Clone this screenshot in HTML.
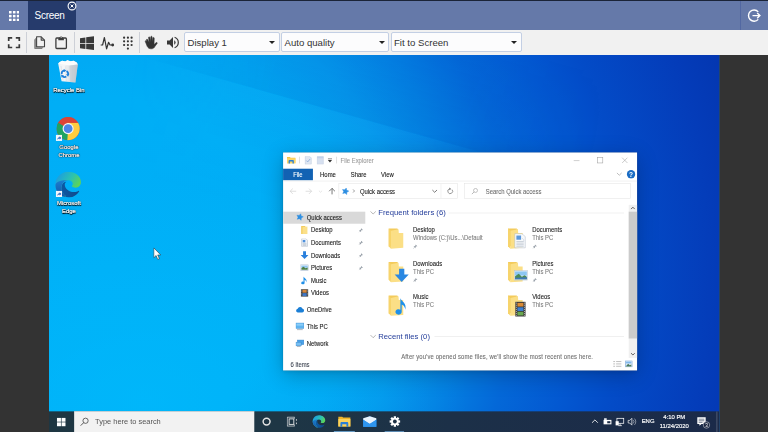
<!DOCTYPE html>
<html lang="en">
<head>
<meta charset="utf-8">
<title>Screen</title>
<style>
*{box-sizing:border-box;margin:0;padding:0}
html,body{width:768px;height:432px;overflow:hidden;background:#333333;font-family:"Liberation Sans",sans-serif}
body{position:relative}
.abs{position:absolute}
#topline{left:0;top:0;width:768px;height:1px;background:#1b2438}
#header{left:0;top:1px;width:768px;height:29.400px;background:#6579a9;z-index:3}
#tab{left:28px;top:0;width:48.300px;height:29.400px;background:#263b6c}
#tab span{position:absolute;left:6.5px;top:9px;font-size:10px;color:#fff;letter-spacing:-0.250px;line-height:12px}
#logout{left:740px;top:0;width:28px;height:29.400px;border-left:1px solid #5268a2}
#toolbar{left:0;top:30px;width:768px;height:25px;background:#f1f1f1}
.sep{position:absolute;top:2px;width:1px;height:21px;background:#cdd0d7}
.sel{position:absolute;top:2.200px;height:20px;background:#fcfcfd;border:1px solid #c3cfe4;border-radius:2px;font-size:9.6px;color:#333;line-height:19px;padding-left:2.500px;white-space:nowrap}
.sel i{position:absolute;right:3.5px;top:7.5px;width:0;height:0;border-left:3.3px solid transparent;border-right:3.3px solid transparent;border-top:3.6px solid #222}
#desk{left:48.900px;top:54.700px;width:1280px;height:720px;transform-origin:0 0;transform:scale(0.52367,0.52403);overflow:hidden;background:#0a74d8;filter:blur(0.450px)}

#wall{left:0;top:0;width:1280px;height:720px;background:radial-gradient(ellipse 620px 420px at 180px 660px,rgba(0,192,255,.45),rgba(0,192,255,0) 100%),radial-gradient(circle 1260px at 100px 420px,#00aff7 0%,#00aef6 27%,#02a6f2 38%,#0598ec 46%,#0482e3 54%,#0468d8 63%,#0358d1 72%,#034cc8 79%,#043cb9 93%,#0436b0 100%)}
#beam1{left:164px;top:0;width:760px;height:230px;transform-origin:0 0;transform:rotate(15.700deg);background:linear-gradient(180deg,rgba(60,200,255,.06),rgba(60,200,255,.02) 40%,rgba(60,200,255,0));-webkit-mask-image:linear-gradient(90deg,transparent,#000 25%,#000 75%,transparent);mask-image:linear-gradient(90deg,transparent,#000 25%,#000 75%,transparent)}
.dlabel{position:absolute;left:0;width:76px;text-align:center;color:#fff;font-size:11.300px;line-height:14.500px;-webkit-text-stroke:0.350px #fff;text-shadow:0 1px 2px rgba(0,0,0,.95),0 0 3px rgba(0,0,0,.85),1px 1px 1px rgba(0,0,0,.8),0 0 1px rgba(0,0,0,.6)}
#win{left:447.200px;top:186.400px;width:675.900px;height:415.200px;background:#fff;box-shadow:0 9px 38px rgba(0,0,0,.24),0 2px 8px rgba(0,0,0,.12),0 0 0 0.500px rgba(0,0,0,.18)}
.t{font-size:11.300px;line-height:14px;color:#151515;white-space:nowrap;-webkit-text-stroke:0.150px currentColor;transform:scaleY(1.130);transform-origin:0 50%}
.gh{font-size:14.700px;line-height:19px;color:#27409c;white-space:nowrap}
#task{left:0;top:680px;width:1280px;height:40px;background:linear-gradient(90deg,#1e3642 0%,#1e3645 35%,#1c3048 60%,#1b2a49 100%)}
.tt{color:#fff;font-size:11.300px;line-height:14px;text-align:center;white-space:nowrap;-webkit-text-stroke:0.300px #fff}
#beam2{left:164px;top:0;width:900px;height:220px;transform-origin:0 0;transform:rotate(15.700deg) translateY(-220px);background:linear-gradient(0deg,rgba(0,60,170,.08),rgba(0,60,170,.03) 60%,rgba(0,60,170,0));-webkit-mask-image:linear-gradient(90deg,transparent,#000 30%,#000 70%,transparent);mask-image:linear-gradient(90deg,transparent,#000 30%,#000 70%,transparent)}
</style>
</head>
<body>
<div id="topline" class="abs"></div>
<div id="header" class="abs">
  <svg class="abs" style="left:8.6px;top:9.6px" width="10.4" height="10.2" viewBox="0 0 10.4 10.2">
    <g fill="#fff"><rect x="0" y="0" width="2.6" height="2.5"/><rect x="3.9" y="0" width="2.6" height="2.5"/><rect x="7.8" y="0" width="2.6" height="2.5"/>
    <rect x="0" y="3.85" width="2.6" height="2.5"/><rect x="3.9" y="3.85" width="2.6" height="2.5"/><rect x="7.8" y="3.85" width="2.6" height="2.5"/>
    <rect x="0" y="7.7" width="2.6" height="2.5"/><rect x="3.9" y="7.7" width="2.6" height="2.5"/><rect x="7.8" y="7.7" width="2.6" height="2.5"/></g>
  </svg>
  <div id="tab" class="abs"><span>Screen</span></div>
  <svg class="abs" style="left:66.700px;top:-0.300px" width="10" height="10" viewBox="0 0 10 10"><circle cx="5" cy="5" r="3.900" fill="none" stroke="#fff" stroke-width="1.100"/><path d="M3.600 3.600L6.400 6.400M6.400 3.600L3.600 6.400" stroke="#fff" stroke-width="1"/></svg>
  <div id="logout" class="abs">
    <svg class="abs" style="left:0;top:0" width="27" height="29" viewBox="0 0 27 29"><path d="M17.26 10.85A5.6 5.6 0 1 0 17.26 18.35" fill="none" stroke="#fff" stroke-width="1.400"/><path d="M11.500 14.600H18.500M16.200 12L18.900 14.600L16.200 17.200" fill="none" stroke="#fff" stroke-width="1.400"/></svg>
  </div>
</div>
<div id="toolbar" class="abs">
  <div class="sep" style="left:26px"></div>
  <div class="sep" style="left:74px"></div>
  <div class="sep" style="left:139px"></div>

  <svg class="abs" style="left:0;top:0" width="184" height="25" viewBox="0 30 184 25">
    <!-- fullscreen -->
    <g fill="none" stroke="#3a3a3a" stroke-width="1.7">
      <path d="M8.7 41V37.8H12.2M15.8 37.8H19.3V41M19.3 44.3V47.5H15.8M12.2 47.5H8.7V44.3"/>
    </g>
    <!-- copy -->
    <g fill="none" stroke="#444" stroke-width="1.1" stroke-linejoin="round">
      <path d="M36.6 36.8H41.2L44.5 40.1V46.7H36.6Z"/>
      <path d="M41.2 36.8V40.1H44.5"/>
      <path d="M35.600 38.200V47.700H43.200M34.700 39.300V48.500H42.200" stroke-width="0.700" stroke="#555"/>
    </g>
    <!-- clipboard -->
    <g fill="none" stroke="#3c3c3c" stroke-width="1.3" stroke-linejoin="round">
      <rect x="55.9" y="38" width="10.5" height="10.5" rx="0.9"/>
    </g>
    <path d="M58.3 40.2V38.4L59.6 37.6A1.6 1.6 0 0 1 62.6 37.6L63.9 38.4V40.2Z" fill="#3c3c3c"/>
    <circle cx="61.1" cy="37.5" r="0.5" fill="#f1f1f1"/>
    <!-- windows -->
    <g fill="#383838">
      <path d="M80 38.2L85.4 37.4V43H80Z"/>
      <path d="M86.2 37.3L94 36.2V43H86.2Z"/>
      <path d="M80 43.8H85.4V49L80 48.2Z"/>
      <path d="M86.2 43.8H94V50.1L86.2 49.1Z"/>
    </g>
    <!-- pulse -->
    <path d="M100.7 45H102.6L104.4 37.5L106.6 48.8L108.6 42.3L110 45H112" fill="none" stroke="#333" stroke-width="1.2" stroke-linejoin="round"/>
    <circle cx="112.7" cy="45" r="1.4" fill="#333"/>
    <!-- keypad -->
    <g fill="#333">
      <circle cx="124.1" cy="37.7" r="1.1"/><circle cx="127.9" cy="37.7" r="1.1"/><circle cx="131.6" cy="37.7" r="1.1"/>
      <circle cx="124.1" cy="41.3" r="1.1"/><circle cx="127.9" cy="41.3" r="1.1"/><circle cx="131.6" cy="41.3" r="1.1"/>
      <circle cx="124.1" cy="45" r="1.1"/><circle cx="127.9" cy="45" r="1.1"/><circle cx="131.6" cy="45" r="1.1"/>
      <circle cx="127.9" cy="48.6" r="1.1"/>
    </g>
    <!-- hand -->
    <path d="M146.4 41.2C145.6 40.3 145 40.6 145.3 41.6L147.2 46.3C148 48 149.3 48.8 151.2 48.8C153.3 48.8 154.3 47.8 155 46.3L157.1 43.4C157.5 42.7 156.7 42.2 156 42.8L154 44.6L154.2 38.2C154.2 37.2 153.1 37.2 153 38.2L152.6 42L152.1 37C152 36 150.8 36 150.8 37L150.9 41.8L149.8 37.4C149.5 36.5 148.5 36.8 148.6 37.7L149.2 42.6L147.6 39.6C147.1 38.8 146.2 39.3 146.6 40.2Z" fill="#333" stroke="#333" stroke-width="0.6" stroke-linejoin="round"/>
    <!-- speaker -->
    <path d="M167 40.4H169.6L173 37V48L169.6 44.6H167Z" fill="#383838"/>
    <path d="M174.2 40.2A2.6 2.6 0 0 1 174.2 44.8Z" fill="#383838"/>
    <path d="M174.6 37.3A5.5 5.5 0 0 1 174.6 47.7" fill="none" stroke="#383838" stroke-width="1.2"/>
  </svg>

  <div class="sel" style="left:184px;width:95.500px">Display 1<i></i></div>
  <div class="sel" style="left:281px;width:108px">Auto quality<i></i></div>
  <div class="sel" style="left:390.500px;width:131px">Fit to Screen<i></i></div>
</div>
<div id="desk" class="abs">
<div class="abs" id="wall"></div>
<div class="abs" id="beam1"></div>
<div class="abs" id="beam2"></div>
<!-- Recycle Bin -->
<svg class="abs" style="left:12.0px;top:4.7px" width="52" height="52" viewBox="0 0 52 52">
  <defs><linearGradient id="rb" x1="0" x2="1" y1="0" y2="0"><stop offset="0" stop-color="#eef1f4"/><stop offset="0.300" stop-color="#f4f6f8"/><stop offset="0.550" stop-color="#e2e6ea"/><stop offset="1" stop-color="#bcc3cb"/></linearGradient></defs>
  <path d="M8 9L13 6L19 7.5L23 5L29 7L35 6L41 9.5L43 13L38.5 47.5L12 45L5.5 11Z" fill="url(#rb)"/>
  <path d="M5.5 11L27 15L43 13L41 9.5L35 6L29 7L23 5L19 7.5L13 6L8 9Z" fill="#fbfcfc"/>
  <path d="M27 15L43 13L38.5 47.5L28 46.5Z" fill="#c3c8cf" opacity="0.55"/><path d="M11 16L15 44M20 16.500L21 45.500M33 16L32.500 46.500" stroke="#c5ccd4" stroke-width="0.900" opacity="0.800" fill="none"/>
  <g fill="none" stroke="#1b7edb" stroke-width="3.2"><path d="M12.2 31.5A6.2 6.2 0 0 1 17 24.6"/><path d="M21.5 25.5A6.2 6.2 0 0 1 24.2 32.6"/><path d="M21 36.2A6.2 6.2 0 0 1 13.6 35.2"/></g>
  <g fill="#1b7edb"><path d="M16 21.5L21 24.5L16.5 28Z"/><path d="M27 31L24.5 36.5L20.5 32Z"/><path d="M12 38.5L11 32.5L16.5 34Z"/></g>
</svg>
<div class="dlabel" style="top:59.7px">Recycle Bin</div>
<!-- Chrome -->
<svg class="abs" style="left:14.0px;top:117.7px" width="45" height="45" viewBox="-22.5 -22.5 45 45">
  <circle r="22" fill="#db4437"/>
  <path d="M0 0L-19.05 -11A22 22 0 0 0 -1.5 21.95L9 4Z" fill="#1da462"/>
  <path d="M0 0L-1.5 21.95A22 22 0 0 0 19.05 -11L-2 -11Z" fill="#ffcd40"/>
  <path d="M-19.05 -11A22 22 0 0 1 19.05 -11L0 -11Z" fill="#db4437"/>
  <circle r="10.6" fill="#f4f6f8"/>
  <circle r="8.4" fill="#4a86e8"/>
</svg>
<svg class="abs shortcut" style="left:13.0px;top:151.7px" width="12" height="12" viewBox="0 0 12 12"><rect width="12" height="12" fill="#f4f6fa"/><path d="M3 10C3 6.5 5 5 7.2 5V3L10.5 6.2L7.2 9.2V7.2C5.5 7.2 4.2 8 3 10Z" fill="#1d5fc0"/></svg>
<div class="dlabel" style="top:168.2px">Google<br>Chrome</div>
<!-- Edge -->
<svg class="abs" style="left:12.0px;top:223.2px" width="49" height="49" viewBox="0 0 48 48">
  <defs>
    <linearGradient id="eg1" x1="0" y1="0" x2="1" y2="0"><stop offset="0" stop-color="#0c59a4"/><stop offset="1" stop-color="#114a8b"/></linearGradient>
    <linearGradient id="eg2" x1="0.1" y1="0.1" x2="0.9" y2="0.6"><stop offset="0" stop-color="#1b9de2"/><stop offset="0.55" stop-color="#2cc2b0"/><stop offset="1" stop-color="#62d64f"/></linearGradient>
    <linearGradient id="eg3" x1="0" y1="0" x2="0" y2="1"><stop offset="0" stop-color="#1b7fd0"/><stop offset="1" stop-color="#1555a8"/></linearGradient>
  </defs>
  <path d="M43.3 35.7c-.6.3-1.300.6-2 .9-2.200.8-4.500 1.200-6.800 1.200-9 0-16.800-6.200-16.800-14.100 0-2.200 1.300-4.200 3.100-5.200-8.100.3-10.200 8.800-10.200 13.800 0 14.100 13 15.500 15.800 15.500 1.500 0 3.800-.4 5.200-.9l.3-.1c5.300-1.800 9.800-5.400 12.700-10.200.4-.7-.4-1.400-1.300-.9z" fill="url(#eg1)"/>
  <path d="M19.800 45.300c-2-1.200-3.700-2.900-5-4.800-4.800-6.600-4.300-15.600 1-21.400 2-2 4.600-3.300 8.200-3.300 6.600 0 8.700 4.700 8.700 6.600 0 1.800-1.100 3.200-1.600 3.700-.5.600-.4 1.300.500 1.900 1 .6 3 1.500 6.300 1.500 5.700 0 10.100-4.600 10.100-10 0-11-10.500-19.500-24-19.500-13.300 0-24 10.700-24 24 0 9.800 6.200 18.700 15.400 22.100 1.500.5 3 .9 4.400-.8z" fill="url(#eg2)"/>
  <path d="M0 24c0 9.800 6.200 18.700 15.400 22.100 1.300.5 2.900.8 4.400-.8-2-1.200-3.700-2.900-5-4.800-4.800-6.600-4.300-15.600 1-21.400 2-2 4.600-3.300 8.200-3.300-9-1-20 .2-24 8.200z" fill="url(#eg3)"/>
</svg>
<svg class="abs shortcut" style="left:13.0px;top:258.7px" width="12" height="12" viewBox="0 0 12 12"><rect width="12" height="12" fill="#f4f6fa"/><path d="M3 10C3 6.500 5 5 7.200 5V3L10.500 6.200L7.200 9.200V7.200C5.500 7.200 4.200 8 3 10Z" fill="#1d5fc0"/></svg>
<div class="dlabel" style="top:276.2px">Microsoft<br>Edge</div>
<!-- cursor -->
<svg class="abs" style="left:198.500px;top:366.500px" width="16" height="25" viewBox="0 0 14 22"><path d="M1 1V17.500L4.800 13.800L7.600 20.300L10.300 19.100L7.500 12.800H12.600Z" fill="#fff" stroke="#2a2a2a" stroke-width="0.900"/></svg>
<div id="win" class="abs">
  <!-- title bar -->
  <svg class="abs" style="left:7px;top:6px" width="18" height="16" viewBox="0 0 18 16">
    <path d="M0.500 2.500H6L7.500 4H16.500V14.500H0.500Z" fill="#f6c343"/>
    <path d="M0.500 5H16.500V14.500H0.500Z" fill="#fbd667"/>
    <path d="M3.500 15V10.200C3.500 9 4.300 8.500 5.200 8.500H11.800C12.700 8.500 13.500 9 13.500 10.200V15H11V11H6V15Z" fill="#2a7fd4"/>
  </svg>
  <div class="abs" style="left:31px;top:8px;width:1px;height:13px;background:#c4c4c4"></div>
  <svg class="abs" style="left:41px;top:7px" width="14" height="16" viewBox="0 0 14 16"><path d="M1 0.500H10L13 3.500V15.500H1Z" fill="#dfe7f3" stroke="#b9c7dd"/><path d="M3.500 8.500L6 11L10.500 5.500" fill="none" stroke="#7fa3d6" stroke-width="1.400"/></svg>
  <svg class="abs" style="left:64px;top:7px" width="14" height="16" viewBox="0 0 14 16"><path d="M1 0.500H13V15.500H1Z" fill="#d6e0f0" stroke="#c2cee3"/><rect x="1" y="0.500" width="12" height="3.500" fill="#c3d1e8"/></svg>
  <svg class="abs" style="left:85px;top:11px" width="9" height="9" viewBox="0 0 9 9"><rect x="0.500" y="0.500" width="8" height="1.300" fill="#333"/><path d="M0.500 3.600H8.500L4.500 8Z" fill="#333"/></svg>
  <div class="abs" style="left:101.5px;top:8px;width:1px;height:13px;background:#c4c4c4"></div>
  <div class="abs t" style="left:109.500px;top:8px;color:#9a9a9a">File Explorer</div>
  <svg class="abs" style="left:537px;top:0" width="138" height="30" viewBox="0 0 138 30">
    <path d="M18 15.500H29" stroke="#b4b4b4" stroke-width="1.200"/>
    <rect x="63.500" y="10" width="10" height="10" fill="none" stroke="#a2a2a2" stroke-width="1.100"/>
    <path d="M110.500 10L120.500 20M120.500 10L110.500 20" stroke="#a4a4a4" stroke-width="1.100"/>
  </svg>
  <!-- ribbon tabs -->
  <div class="abs" style="left:0;top:30.500px;width:56.500px;height:22.500px;background:#1262b3"></div>
  <div class="abs t" style="left:19px;top:35px;color:#fff">File</div>
  <div class="abs t" style="left:70.500px;top:35px">Home</div>
  <div class="abs t" style="left:129px;top:35px">Share</div>
  <div class="abs t" style="left:187px;top:35px">View</div>
  <svg class="abs" style="left:636px;top:37px" width="12" height="9" viewBox="0 0 12 9"><path d="M1.500 2L6 6.500L10.500 2" fill="none" stroke="#a0a0a0" stroke-width="1.300"/></svg>
  <svg class="abs" style="left:655.500px;top:32.500px" width="17" height="17" viewBox="0 0 17 17"><circle cx="8.500" cy="8.500" r="8" fill="#1a6cc4"/><text x="8.500" y="13" font-family="Liberation Sans, sans-serif" font-size="12.500" font-weight="bold" fill="#fff" text-anchor="middle">?</text></svg>
  <div class="abs" style="left:0;top:53.500px;width:675.500px;height:1px;background:#e4e4e4"></div>
  <!-- nav row -->
  <svg class="abs" style="left:10px;top:65px" width="96" height="18" viewBox="0 0 96 18">
    <path d="M15 9H3.500M8.500 4L3.500 9L8.500 14" fill="none" stroke="#cfcfcf" stroke-width="1.300"/>
    <path d="M33 9H44.500M39.500 4L44.500 9L39.500 14" fill="none" stroke="#cfcfcf" stroke-width="1.300"/>
    <path d="M58.500 8L61.500 11L64.500 8" fill="none" stroke="#d8d8d8" stroke-width="1.200"/>
    <path d="M83.500 15V3.500M78 9L83.500 3.500L89 9" fill="none" stroke="#555" stroke-width="1.500"/>
  </svg>
  <div class="abs" style="left:105.500px;top:59px;width:228px;height:28.500px;border:1px solid #e2e2e2"></div>
  <div class="abs" style="left:301px;top:60px;width:1px;height:26.500px;background:#e6e6e6"></div>
  <svg class="abs" style="left:112px;top:66.500px" width="14" height="14" viewBox="0 0 14 14"><path d="M8.60 0.80L9.53 5.08L13.58 6.74L9.80 8.95L9.47 13.32L6.20 10.40L1.94 11.44L3.71 7.43L1.40 3.70L5.76 4.14Z" fill="#2d8fe2" stroke="#2d8fe2" stroke-width="0.800" stroke-linejoin="round"/></svg>
  <svg class="abs" style="left:131.500px;top:69px" width="6" height="9" viewBox="0 0 6 9"><path d="M1.500 1.500L4.500 4.500L1.500 7.500" fill="none" stroke="#555" stroke-width="1.100"/></svg>
  <div class="abs t" style="left:146.500px;top:66.500px">Quick access</div>
  <svg class="abs" style="left:284px;top:69.500px" width="11" height="8" viewBox="0 0 11 8"><path d="M1 1.500L5.500 6L10 1.500" fill="none" stroke="#555" stroke-width="1.500"/></svg>
  <svg class="abs" style="left:311.500px;top:66px" width="14" height="15" viewBox="0 0 14 15"><path d="M10.700 5A4.600 4.600 0 1 1 6 3.500" fill="none" stroke="#666" stroke-width="1.300"/><path d="M5.500 0.800L8.800 3.500L5.500 6.200Z" fill="#666"/></svg>
  <div class="abs" style="left:346px;top:59px;width:318px;height:28.500px;border:1px solid #e2e2e2"></div>
  <svg class="abs" style="left:359px;top:67px" width="14" height="14" viewBox="0 0 14 14"><circle cx="8.500" cy="5.500" r="3.800" fill="none" stroke="#999" stroke-width="1.100"/><path d="M5.800 8.200L1.500 12.500" stroke="#999" stroke-width="1.300"/></svg>
  <div class="abs t" style="left:387px;top:66.500px;color:#6d6d6d">Search Quick access</div>
<div class="abs" style="left:0;top:112.500px;width:156.500px;height:23.500px;background:#d9d9d9"></div>
<svg class="abs" style="left:25px;top:116px" width="16" height="16" viewBox="0 0 16 16"><path d="M8.60 0.80L9.53 5.08L13.58 6.74L9.80 8.95L9.47 13.32L6.20 10.40L1.94 11.44L3.71 7.43L1.40 3.70L5.76 4.14Z" fill="#2d8fe2" stroke="#2d8fe2" stroke-width="0.800" stroke-linejoin="round"/></svg>
<div class="abs t" style="left:45px;top:117px">Quick access</div>
<svg class="abs" style="left:33px;top:140px" width="16" height="16" viewBox="0 0 16 16"><path d="M1.500 0.500H9.500V15.500H1.500Z" fill="#f4cd5e"/><path d="M4 2.500L13.500 1.500V15.500H4Z" fill="#fbe08a"/></svg>
<div class="abs t" style="left:53px;top:141px">Desktop</div>
<svg class="abs" style="left:143.5px;top:143.5px" width="9" height="9" viewBox="0 0 9 9"><path d="M5.200 0.500L8.500 3.800L7.600 4.300L6.400 4.100L4.900 5.600L5 7.100L4.400 7.700L1.300 4.600L1.900 4L3.400 4.100L4.900 2.600L4.700 1.400Z" fill="#98a0a9"/><path d="M2.800 6.200L0.600 8.400" stroke="#98a0a9" stroke-width="0.900"/></svg>
<svg class="abs" style="left:33px;top:164px" width="16" height="16" viewBox="0 0 16 16"><path d="M2.500 0.500H10.500L13.500 3.500V15.500H2.500Z" fill="#f3f6fa" stroke="#9aa7b8" stroke-width="0.900"/><rect x="4.500" y="3" width="5" height="4.500" fill="#4b8fdc"/><path d="M4.500 9.500H11.500M4.500 11.500H11.500M4.500 13.500H11.500" stroke="#9aa7b8" stroke-width="0.900"/></svg>
<div class="abs t" style="left:53px;top:165px">Documents</div>
<svg class="abs" style="left:143.5px;top:167.5px" width="9" height="9" viewBox="0 0 9 9"><path d="M5.200 0.500L8.500 3.800L7.600 4.300L6.400 4.100L4.900 5.600L5 7.100L4.400 7.700L1.300 4.600L1.900 4L3.400 4.100L4.900 2.600L4.700 1.400Z" fill="#98a0a9"/><path d="M2.800 6.200L0.600 8.400" stroke="#98a0a9" stroke-width="0.900"/></svg>
<svg class="abs" style="left:33px;top:188px" width="16" height="16" viewBox="0 0 16 16"><path d="M5.200 0.500H10.800V7.500H15.500L8 15.500L0.500 7.500H5.200Z" fill="#2a80dc"/></svg>
<div class="abs t" style="left:53px;top:189px">Downloads</div>
<svg class="abs" style="left:143.5px;top:191.5px" width="9" height="9" viewBox="0 0 9 9"><path d="M5.200 0.500L8.500 3.800L7.600 4.300L6.400 4.100L4.900 5.600L5 7.100L4.400 7.700L1.300 4.600L1.900 4L3.400 4.100L4.900 2.600L4.700 1.400Z" fill="#98a0a9"/><path d="M2.800 6.200L0.600 8.400" stroke="#98a0a9" stroke-width="0.900"/></svg>
<svg class="abs" style="left:33px;top:212px" width="16" height="16" viewBox="0 0 16 16"><rect x="0.500" y="2.500" width="15" height="11" fill="#e9f2fb" stroke="#9fb1c6" stroke-width="0.900"/><rect x="2" y="4" width="12" height="4" fill="#8fc4f0"/><path d="M2 12V8.500L6 6L10 9L14 7.500V12Z" fill="#4c7f45"/></svg>
<div class="abs t" style="left:53px;top:213px">Pictures</div>
<svg class="abs" style="left:143.5px;top:215.5px" width="9" height="9" viewBox="0 0 9 9"><path d="M5.200 0.500L8.500 3.800L7.600 4.300L6.400 4.100L4.900 5.600L5 7.100L4.400 7.700L1.300 4.600L1.900 4L3.400 4.100L4.900 2.600L4.700 1.400Z" fill="#98a0a9"/><path d="M2.800 6.200L0.600 8.400" stroke="#98a0a9" stroke-width="0.900"/></svg>
<svg class="abs" style="left:33px;top:236px" width="16" height="16" viewBox="0 0 16 16"><path d="M6 0.500C8 4.500 13.500 5 11.500 12C11.300 8.500 9 7 8 6.800V13A3.200 2.800 0 1 1 6 10.500Z" fill="#1f8fe8"/></svg>
<div class="abs t" style="left:53px;top:237px">Music</div>
<svg class="abs" style="left:33px;top:260px" width="16" height="16" viewBox="0 0 16 16"><rect x="1" y="1" width="14" height="14" fill="#3d3d3d"/><rect x="4" y="2" width="8" height="5.500" fill="#d8873a"/><rect x="4" y="8.500" width="8" height="5.500" fill="#3f78c8"/><path d="M2.500 2V14M13.500 2V14" stroke="#bbb" stroke-width="1.200" stroke-dasharray="1.500 1.500"/></svg>
<div class="abs t" style="left:53px;top:261px">Videos</div>
<svg class="abs" style="left:24px;top:291.5px" width="16" height="16" viewBox="0 0 16 16"><path d="M4.200 13.500A3.700 3.700 0 0 1 3.800 6.200A5 5 0 0 1 12.800 5.600A4 4 0 0 1 12.500 13.500Z" fill="#1b7fd6"/></svg>
<div class="abs t" style="left:45px;top:292.5px">OneDrive</div>
<svg class="abs" style="left:24px;top:323.5px" width="16" height="16" viewBox="0 0 16 16"><rect x="0.500" y="1.500" width="15" height="10" fill="#5fb5f1" stroke="#3c8fd4" stroke-width="1"/><rect x="1.500" y="2.500" width="13" height="4" fill="#8ccdf7"/><rect x="2.500" y="13.500" width="11" height="1.500" fill="#9aa3ad"/></svg>
<div class="abs t" style="left:45px;top:324.5px">This PC</div>
<svg class="abs" style="left:24px;top:355.5px" width="16" height="16" viewBox="0 0 16 16"><rect x="3.500" y="2" width="12" height="8.500" fill="#4aa3ea" stroke="#2f7fc9" stroke-width="0.900"/><rect x="0.500" y="6" width="10" height="7" fill="#78c0f3" stroke="#2f7fc9" stroke-width="0.900"/><rect x="2.500" y="14" width="7" height="1.300" fill="#8e99a5"/></svg>
<div class="abs t" style="left:45px;top:356.5px">Network</div>
<svg class="abs" style="left:165.500px;top:111px" width="12" height="8" viewBox="0 0 12 8"><path d="M1 1.500L6 6.500L11 1.500" fill="none" stroke="#8a8a8a" stroke-width="1.200"/></svg>
<div class="abs gh" style="left:181.500px;top:105.5px">Frequent folders (6)</div>
<div class="abs" style="left:316px;top:115px;width:335px;height:1px;background:#e3e3e3"></div>
<svg class="abs" style="left:165.500px;top:346.5px" width="12" height="8" viewBox="0 0 12 8"><path d="M1 1.500L6 6.500L11 1.500" fill="none" stroke="#8a8a8a" stroke-width="1.200"/></svg>
<div class="abs gh" style="left:181.500px;top:341.0px">Recent files (0)</div>
<div class="abs" style="left:289px;top:350.5px;width:362px;height:1px;background:#e3e3e3"></div>
<svg class="abs" style="left:201px;top:143.5px" width="42" height="44" viewBox="0 0 42 44"><path d="M0.500 1H17V35H0.500Z" fill="#f3cb5c"/><path d="M17 1L18.500 2.500V9H17Z" fill="#e9bd4a"/><path d="M5 5.500L19.500 2.500L20 9.500H28.500V38L5 39.500Z" fill="#fbdf86"/><path d="M0.500 35L5 39.500V5.500L0.500 1Z" fill="#f7d46c"/></svg>
<div class="abs t" style="left:248px;top:140.5px;color:#1a1a1a">Desktop</div>
<div class="abs t" style="left:248px;top:155.5px;color:#7d7d7d">Windows (C:)\Us...\Default</div>
<svg class="abs" style="left:248px;top:174.5px" width="9" height="9" viewBox="0 0 9 9"><path d="M5.200 0.500L8.500 3.800L7.600 4.300L6.400 4.100L4.900 5.600L5 7.100L4.400 7.700L1.300 4.600L1.900 4L3.400 4.100L4.900 2.600L4.700 1.400Z" fill="#98a0a9"/><path d="M2.800 6.200L0.600 8.400" stroke="#98a0a9" stroke-width="0.900"/></svg>
<svg class="abs" style="left:429px;top:143.5px" width="42" height="44" viewBox="0 0 42 44"><path d="M0.500 1H17V35H0.500Z" fill="#f3cb5c"/><path d="M17 1L18.500 2.500V9H17Z" fill="#e9bd4a"/><path d="M5 5.500L19.500 2.500L20 9.500H28.500V38L5 39.500Z" fill="#fbdf86"/><path d="M0.500 35L5 39.500V5.500L0.500 1Z" fill="#f7d46c"/><g transform="translate(13 10.500)"><path d="M0.500 0.500H14L20.500 6V27.500H0.500Z" fill="#f7f9fb" stroke="#aab4c2" stroke-width="0.900"/><rect x="3.500" y="4" width="9" height="8" fill="#5b98dc"/><path d="M3.500 15.500H17.500M3.500 18.500H17.500M3.500 21.500H17.500M3.500 24.500H17.500" stroke="#aab4c2" stroke-width="1.100"/><path d="M14.500 9L17.500 12V15" stroke="#c0c8d2" fill="none"/></g></svg>
<div class="abs t" style="left:475.5px;top:140.5px;color:#1a1a1a">Documents</div>
<div class="abs t" style="left:475.5px;top:155.5px;color:#7d7d7d">This PC</div>
<svg class="abs" style="left:475.5px;top:174.5px" width="9" height="9" viewBox="0 0 9 9"><path d="M5.200 0.500L8.500 3.800L7.600 4.300L6.400 4.100L4.900 5.600L5 7.100L4.400 7.700L1.300 4.600L1.900 4L3.400 4.100L4.900 2.600L4.700 1.400Z" fill="#98a0a9"/><path d="M2.800 6.200L0.600 8.400" stroke="#98a0a9" stroke-width="0.900"/></svg>
<svg class="abs" style="left:201px;top:207.5px" width="42" height="44" viewBox="0 0 42 44"><path d="M0.500 1H17V35H0.500Z" fill="#f3cb5c"/><path d="M17 1L18.500 2.500V9H17Z" fill="#e9bd4a"/><path d="M5 5.500L19.500 2.500L20 9.500H28.500V38L5 39.500Z" fill="#fbdf86"/><path d="M0.500 35L5 39.500V5.500L0.500 1Z" fill="#f7d46c"/><path d="M17.500 14H27.500V25H36L22.500 39L9 25H17.500Z" fill="#2a88e2" transform="translate(3 0)"/></svg>
<div class="abs t" style="left:248px;top:204.5px;color:#1a1a1a">Downloads</div>
<div class="abs t" style="left:248px;top:219.5px;color:#7d7d7d">This PC</div>
<svg class="abs" style="left:248px;top:238.5px" width="9" height="9" viewBox="0 0 9 9"><path d="M5.200 0.500L8.500 3.800L7.600 4.300L6.400 4.100L4.900 5.600L5 7.100L4.400 7.700L1.300 4.600L1.900 4L3.400 4.100L4.900 2.600L4.700 1.400Z" fill="#98a0a9"/><path d="M2.800 6.200L0.600 8.400" stroke="#98a0a9" stroke-width="0.900"/></svg>
<svg class="abs" style="left:429px;top:207.5px" width="42" height="44" viewBox="0 0 42 44"><path d="M0.500 1H17V35H0.500Z" fill="#f3cb5c"/><path d="M17 1L18.500 2.500V9H17Z" fill="#e9bd4a"/><path d="M5 5.500L19.500 2.500L20 9.500H28.500V38L5 39.500Z" fill="#fbdf86"/><path d="M0.500 35L5 39.500V5.500L0.500 1Z" fill="#f7d46c"/><g transform="translate(12 17)"><rect x="0.500" y="0.500" width="25.500" height="18" fill="#eef4fa" stroke="#b4c0cf" stroke-width="0.900"/><rect x="2" y="2" width="22.500" height="8" fill="#8cc6f2"/><path d="M2 17V11L9 6.500L15 12L20 9.500L24.500 12V17Z" fill="#4c8a55"/><path d="M2 17V14L24.500 13V17Z" fill="#3f78b8"/></g></svg>
<div class="abs t" style="left:475.5px;top:204.5px;color:#1a1a1a">Pictures</div>
<div class="abs t" style="left:475.5px;top:219.5px;color:#7d7d7d">This PC</div>
<svg class="abs" style="left:475.5px;top:238.5px" width="9" height="9" viewBox="0 0 9 9"><path d="M5.200 0.500L8.500 3.800L7.600 4.300L6.400 4.100L4.900 5.600L5 7.100L4.400 7.700L1.300 4.600L1.900 4L3.400 4.100L4.900 2.600L4.700 1.400Z" fill="#98a0a9"/><path d="M2.800 6.200L0.600 8.400" stroke="#98a0a9" stroke-width="0.900"/></svg>
<svg class="abs" style="left:201px;top:271.5px" width="42" height="44" viewBox="0 0 42 44"><path d="M0.500 1H17V35H0.500Z" fill="#f3cb5c"/><path d="M17 1L18.500 2.500V9H17Z" fill="#e9bd4a"/><path d="M5 5.500L19.500 2.500L20 9.500H28.500V38L5 39.500Z" fill="#fbdf86"/><path d="M0.500 35L5 39.500V5.500L0.500 1Z" fill="#f7d46c"/><g transform="translate(13 6)"><path d="M10 0C14 8 22 9 19.500 22C19 15 14 12.500 12.500 12V26.500A6 5.200 0 1 1 10 22Z" fill="#1e90ea"/></g></svg>
<div class="abs t" style="left:248px;top:268.5px;color:#1a1a1a">Music</div>
<div class="abs t" style="left:248px;top:283.5px;color:#7d7d7d">This PC</div>
<svg class="abs" style="left:429px;top:271.5px" width="42" height="44" viewBox="0 0 42 44"><path d="M0.500 1H17V35H0.500Z" fill="#f3cb5c"/><path d="M17 1L18.500 2.500V9H17Z" fill="#e9bd4a"/><path d="M5 5.500L19.500 2.500L20 9.500H28.500V38L5 39.500Z" fill="#fbdf86"/><path d="M0.500 35L5 39.500V5.500L0.500 1Z" fill="#f7d46c"/><g transform="translate(14.500 13)"><rect width="19.500" height="28" fill="#3a3a3a"/><rect x="4" y="2" width="11.500" height="7" fill="#d98a35"/><rect x="4" y="10.500" width="11.500" height="7" fill="#3c7fd1"/><rect x="4" y="19" width="11.500" height="7" fill="#6aa84f"/><path d="M2 1.500V27M17.500 1.500V27" stroke="#c8c8c8" stroke-width="1.600" stroke-dasharray="2 2"/></g></svg>
<div class="abs t" style="left:475.5px;top:268.5px;color:#1a1a1a">Videos</div>
<div class="abs t" style="left:475.5px;top:283.5px;color:#7d7d7d">This PC</div>
<div class="abs t" style="left:225.500px;top:382px;color:#6d6d6d;letter-spacing:0.250px">After you've opened some files, we'll show the most recent ones here.</div>
<div class="abs" style="left:659.500px;top:100px;width:16.400px;height:292px;background:#f0f0f0"></div>
<div class="abs" style="left:659.500px;top:113px;width:16.400px;height:241.500px;background:#cbcbcb"></div>
<svg class="abs" style="left:662.700px;top:102px" width="10" height="8" viewBox="0 0 10 8"><path d="M1.500 6L5 2.500L8.500 6" fill="none" stroke="#555" stroke-width="1.800"/></svg>
<svg class="abs" style="left:662.700px;top:380.500px" width="10" height="8" viewBox="0 0 10 8"><path d="M1.500 2L5 5.500L8.500 2" fill="none" stroke="#555" stroke-width="1.800"/></svg>
<div class="abs t" style="left:14px;top:397.500px;color:#3c4350">6 items</div>
<svg class="abs" style="left:630px;top:397px" width="38" height="13" viewBox="0 0 38 13"><g stroke="#9a9a9a" stroke-width="1.200"><path d="M0.500 2H4M6 2H16M0.500 6.500H4M6 6.500H16M0.500 11H4M6 11H16"/></g><rect x="23.500" y="0.500" width="13" height="12" fill="#dbe8f6" stroke="#6a9ad0" stroke-width="1"/><path d="M25 10.500L29 6L32 9L35 7.500V11.500H25Z" fill="#4a7a5a"/><rect x="25" y="2" width="10" height="3.500" fill="#7fb8ec"/></svg>
</div>
<div id="task" class="abs">
  <svg class="abs" style="left:15px;top:12px" width="17" height="17" viewBox="0 0 17 17"><g fill="#fff"><rect x="0" y="0" width="7.800" height="7.800"/><rect x="9" y="0" width="7.800" height="7.800"/><rect x="0" y="9" width="7.800" height="7.800"/><rect x="9" y="9" width="7.800" height="7.800"/></g></svg>
  <div class="abs" style="left:48px;top:0;width:344px;height:40px;background:#f2f2f2;border-top:1px solid #dcdcdc"></div>
  <svg class="abs" style="left:59px;top:11px" width="18" height="18" viewBox="0 0 18 18"><circle cx="10.800" cy="7" r="5" fill="none" stroke="#444" stroke-width="1.500"/><path d="M7.200 10.600L1.500 16.300" stroke="#444" stroke-width="1.700"/></svg>
  <div class="abs" style="left:88px;top:12px;font-size:14.200px;line-height:17px;color:#555;white-space:nowrap">Type here to search</div>
  <svg class="abs" style="left:392px;top:0" width="300" height="40" viewBox="392 0 300 40"><g transform="translate(0,-1.600)">
    <circle cx="415.500" cy="21.200" r="6.600" fill="none" stroke="#e2e2e2" stroke-width="2.800"/>
    <g fill="none" stroke="#e8e8e8"><rect x="458.500" y="16" width="9" height="10.500" stroke-width="1.700"/><path d="M455 12.800H469M455 29.700H469" stroke-width="1.300"/><path d="M455.300 12.500V30M468.500 12.500V16M468.500 26.500V30" stroke-width="1.100"/><path d="M472.500 16.500V19.500M472.500 23V26" stroke-width="1.600"/></g>
    <!-- edge -->
    <defs><linearGradient id="te1" x1="0" y1="0" x2="1" y2="0.700"><stop offset="0" stop-color="#1b9de2"/><stop offset="0.600" stop-color="#2cc2b0"/><stop offset="1" stop-color="#62d64f"/></linearGradient></defs>
    <g transform="translate(503.500 9.200) scale(0.500)"><path d="M43.3 35.7c-.6.3-1.300.6-2 .9-2.200.8-4.500 1.200-6.800 1.200-9 0-16.800-6.200-16.800-14.100 0-2.200 1.300-4.200 3.100-5.200-8.100.3-10.200 8.800-10.200 13.800 0 14.100 13 15.500 15.800 15.500 1.500 0 3.800-.4 5.200-.9l.3-.1c5.300-1.800 9.800-5.400 12.700-10.200.4-.7-.4-1.400-1.300-.9z" fill="url(#eg1)"/>
  <path d="M19.800 45.300c-2-1.200-3.700-2.900-5-4.800-4.800-6.600-4.300-15.600 1-21.400 2-2 4.600-3.300 8.200-3.300 6.600 0 8.700 4.700 8.700 6.600 0 1.800-1.100 3.200-1.600 3.700-.5.600-.4 1.300.500 1.900 1 .6 3 1.500 6.300 1.500 5.700 0 10.100-4.600 10.100-10 0-11-10.500-19.500-24-19.500-13.300 0-24 10.700-24 24 0 9.800 6.200 18.700 15.400 22.100 1.500.5 3 .9 4.400-.8z" fill="url(#eg2)"/>
  <path d="M0 24c0 9.800 6.200 18.700 15.400 22.100 1.300.5 2.900.8 4.400-.8-2-1.200-3.700-2.900-5-4.800-4.800-6.600-4.300-15.600 1-21.400 2-2 4.600-3.300 8.200-3.300-9-1-20 .2-24 8.200z" fill="url(#eg3)"/></g>
    <!-- explorer -->
    <path d="M552.500 12H560L561.500 13.500H575.500V30.500H552.500Z" fill="#f0b429"/>
    <path d="M552.500 16H575.500V30.500H552.500Z" fill="#fbd35d"/>
    <path d="M556.500 31V24.500C556.500 23 557.500 22 559 22H569C570.500 22 571.500 23 571.500 24.500V31H568V26H560V31Z" fill="#2b7fd6"/>
    
    <!-- mail -->
    <path d="M600 17L612.500 10.500L625 17V31H600Z" fill="#1565c0"/>
    <path d="M600 17.500H625V31H600Z" fill="#2b8ee8"/>
    <path d="M600 17.500L612.500 25.500L625 17.500L625 15L612.500 11L600 15Z" fill="#eaf3fc"/>
    <path d="M600 17.500L612.500 26L625 17.500V31H600Z" fill="#2f95ee"/>
    <!-- settings -->
    <g transform="translate(660.500 21)"><g fill="#fff"><rect x="-2.200" y="-10" width="4.400" height="20"/><rect x="-2.200" y="-10" width="4.400" height="20" transform="rotate(45)"/><rect x="-2.200" y="-10" width="4.400" height="20" transform="rotate(90)"/><rect x="-2.200" y="-10" width="4.400" height="20" transform="rotate(135)"/></g><circle r="7.200" fill="#fff"/><circle r="3.600" fill="#1d3145"/></g>
    
  </g>
    <rect x="544" y="38" width="40" height="2" fill="#7fbdee"/><rect x="641" y="38" width="37" height="2" fill="#7fbdee" opacity="0.850"/>
  </svg>
  <svg class="abs" style="left:1030px;top:0" width="250" height="40" viewBox="1030 0 250 40">
    <path d="M1037 21.800L1042.500 16.300L1048 21.800" fill="none" stroke="#fff" stroke-width="1.600"/>
    <g transform="translate(0,-1.200)"><g fill="#fff"><rect x="1059" y="17.500" width="15" height="8.500"/><rect x="1060" y="14.500" width="5" height="3"/></g><rect x="1066" y="20" width="6" height="4" fill="#1c2c47"/>
    <g fill="none" stroke="#fff" stroke-width="1.400"><rect x="1084.500" y="14.500" width="13" height="9.500"/><path d="M1087 28.500H1094M1090.500 24V28.500"/></g><rect x="1082" y="20" width="6" height="8" fill="#fff"/>
    <path d="M1106 18.500H1109L1113 14.500V27.500L1109 23.500H1106Z" fill="none" stroke="#fff" stroke-width="1.300"/><path d="M1115.500 17.500A5 5 0 0 1 1115.500 24.500M1118 15A8.500 8.500 0 0 1 1118 27" fill="none" stroke="#fff" stroke-width="1.100" opacity="0.800"/>
    </g>
    <path d="M1238 11.500H1254V24H1246L1242 27.500V24H1238Z" fill="#fff"/><path d="M1240.500 15H1251.500M1240.500 18H1251.500M1240.500 21H1248" stroke="#1c2b48" stroke-width="1.100"/>
    <circle cx="1255.500" cy="26" r="6.200" fill="#1c2742" stroke="#b9bec8" stroke-width="1.200"/>
    <text x="1255.500" y="29.300" font-family="Liberation Sans, sans-serif" font-size="9" fill="#fff" text-anchor="middle">3</text>
    <rect x="1275" y="0" width="1" height="40" fill="#7f8795"/>
  </svg>
  <div class="abs tt" style="left:1124px;top:12.200px;width:40px">ENG</div>
  <div class="abs tt" style="left:1154px;top:3.500px;width:80px">4:10 PM</div>
  <div class="abs tt" style="left:1154px;top:20px;width:80px">11/24/2020</div>
</div>

</div>
</body>
</html>
